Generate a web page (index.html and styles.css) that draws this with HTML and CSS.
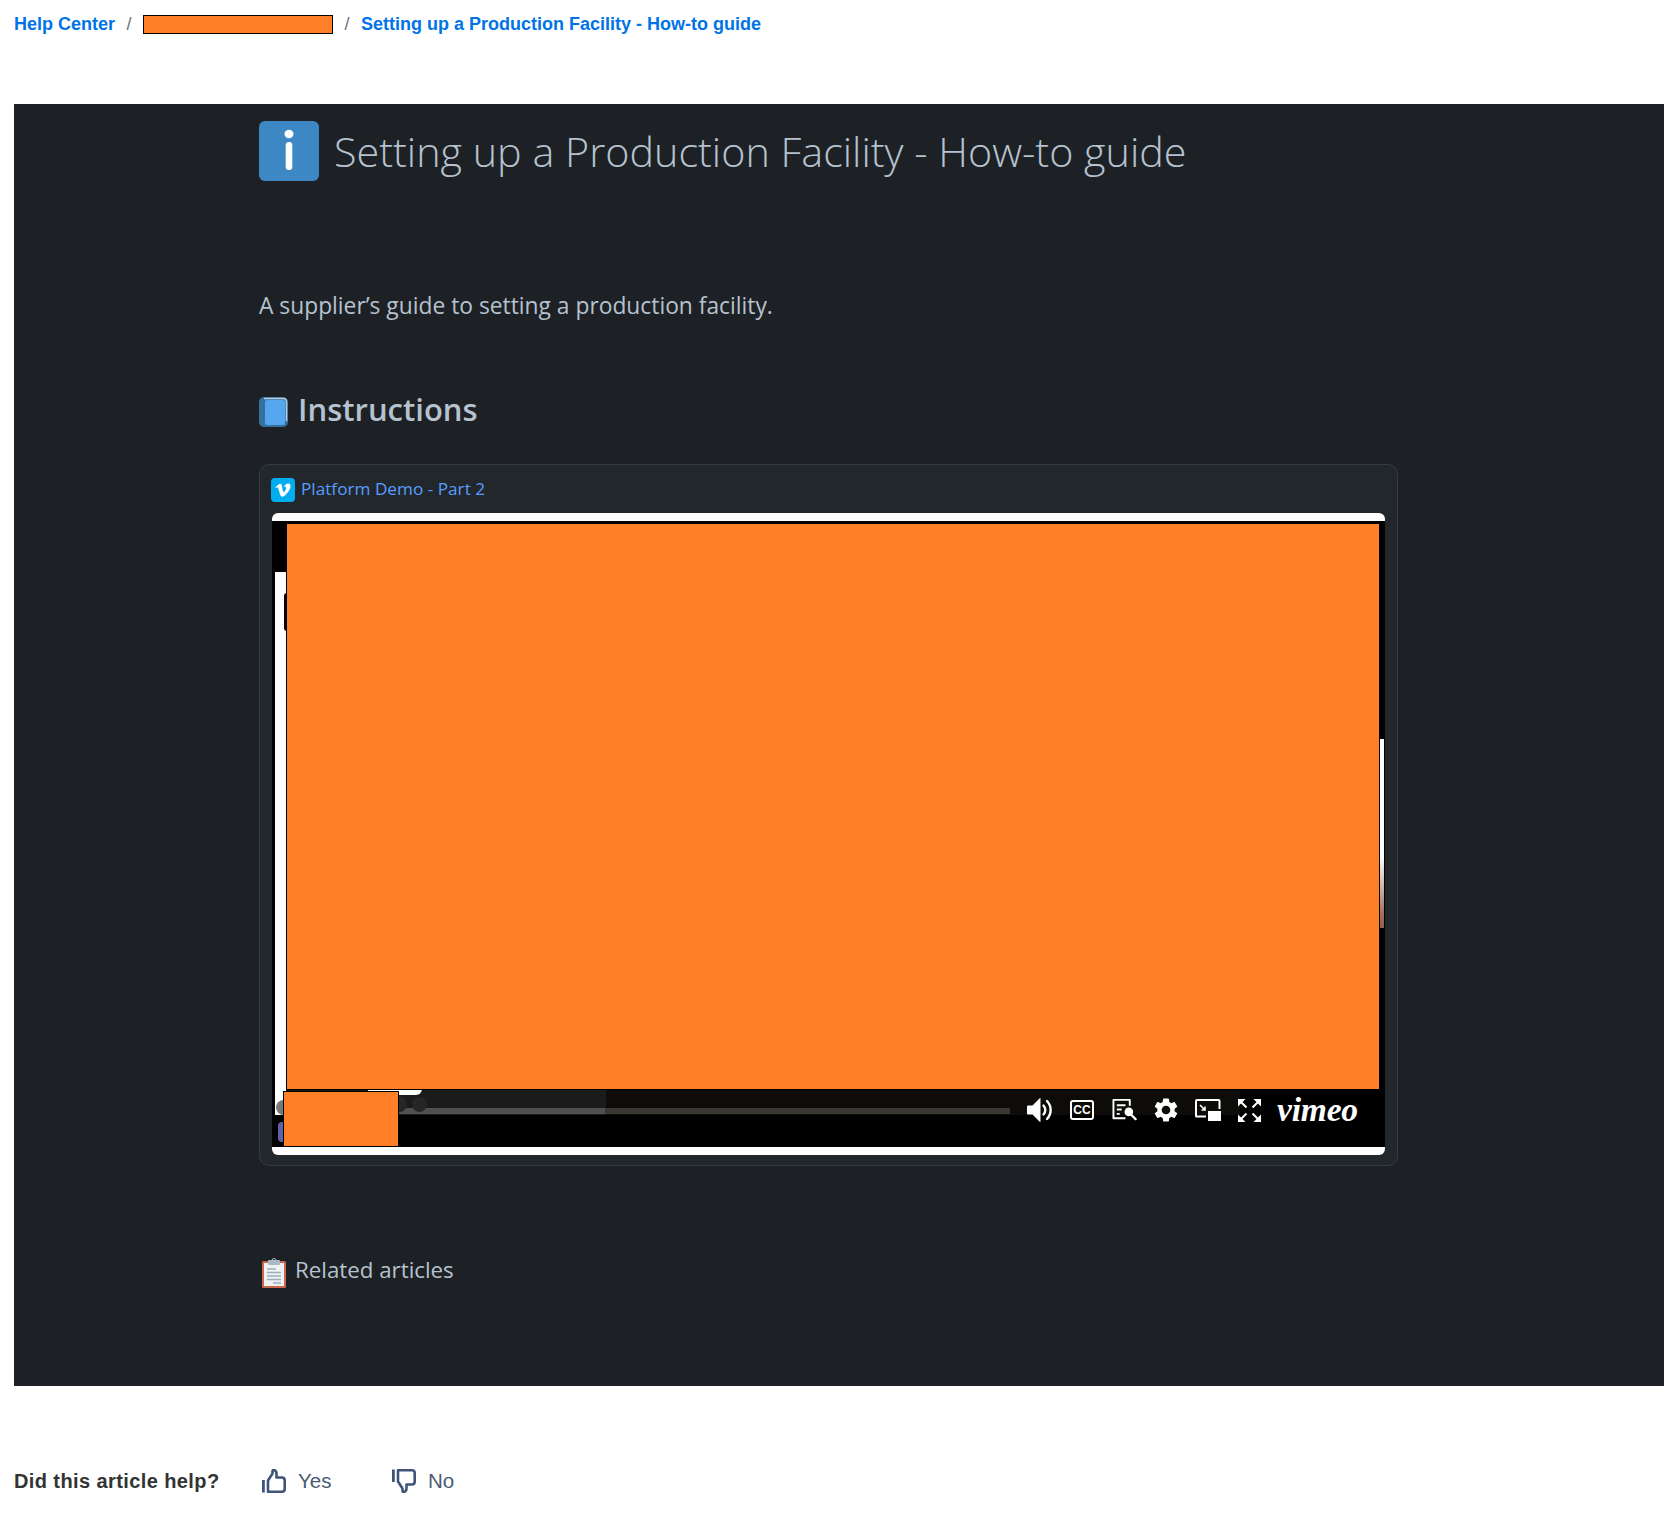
FILE: index.html
```html
<!DOCTYPE html>
<html lang="en">
<head>
    <meta charset="UTF-8">
    <title>Setting up a Production Facility - How-to guide</title>
    <link rel="stylesheet" href="styles.css">
</head>
<body>
    <nav class="breadcrumbs">
        <a class="crumb" href="#">Help Center</a>
        <span class="crumb-sep">/</span>
        <span class="crumb-hidden"></span>
        <span class="crumb-sep">/</span>
        <a class="crumb" href="#">Setting up a Production Facility - How-to guide</a>
    </nav>

    <main class="article">
        <div class="title-row">
            <svg class="info-icon" viewBox="0 0 60 60">
                <rect width="60" height="60" rx="6" fill="#3d88c4"/>
                <ellipse cx="30" cy="13" rx="4.500" ry="4.200" fill="#fff"/>
                <rect x="26.700" y="21" width="6.600" height="28" rx="3.300" fill="#fff"/>
            </svg>
            <h1>Setting up a Production Facility - How-to guide</h1>
        </div>

        <p class="lead">A supplier’s guide to setting a production facility.</p>

        <div class="section-row">
            <svg class="book-icon" viewBox="0 0 29 30">
                <rect x="0" y="0" width="29" height="30" rx="5" fill="#33719f"/>
                <path fill="none" stroke="#b9c9d6" stroke-width="1.500" d="M5 1.500h19c2 0 3.500 1.500 3.500 3.500v19"/>
                <rect x="6" y="3" width="20" height="25" rx="2" fill="#55a6ee"/>
            </svg>
            <h2>Instructions</h2>
        </div>

        <section class="card">
            <div class="card-head">
                <svg class="vimeo-icon" viewBox="0 0 24 24">
                    <rect width="24" height="24" rx="4" fill="#00adef"/>
                    <g transform="translate(4.400 4.600) scale(.63)">
                        <path fill="#fff" d="M23.977 6.416c-.105 2.338-1.739 5.543-4.894 9.609-3.268 4.247-6.026 6.37-8.29 6.37-1.409 0-2.578-1.294-3.553-3.881L5.322 11.4C4.603 8.816 3.834 7.522 3.01 7.522c-.179 0-.806.378-1.881 1.132L0 7.197c1.185-1.044 2.351-2.084 3.501-3.128C5.08 2.701 6.266 1.984 7.055 1.91c1.867-.18 3.016 1.1 3.447 3.838.465 2.953.789 4.789.971 5.507.539 2.45 1.131 3.674 1.776 3.674.502 0 1.256-.796 2.265-2.385 1.004-1.589 1.54-2.797 1.612-3.628.144-1.371-.395-2.061-1.614-2.061-.574 0-1.167.121-1.777.391 1.186-3.868 3.434-5.757 6.762-5.637 2.473.06 3.628 1.664 3.493 4.797l-.013.01z"/>
                    </g>
                </svg>
                <a class="card-link" href="#">Platform Demo - Part 2</a>
            </div>

            <div class="player">
                <div class="stage">
                    <div class="screen-strip"></div>
                    <div class="screen-notch"></div>
                    <div class="side-strip"></div>
                    <div class="control-shade"></div>
                    <div class="control-shade-light"></div>
                    <div class="progress"></div>
                    <div class="tab-white"></div>
                    <div class="nav-dot nav-dot-a"></div>
                    <div class="nav-dot nav-dot-b"></div>
                    <div class="nav-dot nav-dot-c"></div>
                    <div class="teams-tile"></div>
                    <div class="redact redact-main"></div>
                    <div class="redact redact-small"></div>

                    <div class="controls">
                        <svg class="ctl ctl-sound" viewBox="0 0 25 24">
                            <path fill="#fff" stroke="#fff" stroke-width="1" stroke-linejoin="round" d="M.5 8h5l7.500-7.500v23L5.500 16h-5z"/>
                            <path fill="none" stroke="#fff" stroke-width="2.400" stroke-linecap="round" d="M16.500 7.500a6.500 6.500 0 0 1 0 9M20 3a13 13 0 0 1 0 18"/>
                        </svg>
                        <svg class="ctl ctl-cc" viewBox="0 0 24 20">
                            <rect x="1" y="1" width="22" height="18" rx="2" fill="none" stroke="#fff" stroke-width="2"/>
                            <text x="12" y="14.200" class="cc-text">CC</text>
                        </svg>
                        <svg class="ctl ctl-transcript" viewBox="0 0 26 24">
                            <path fill="none" stroke="#fff" stroke-width="2" stroke-linejoin="round" d="M14 20.500H1.500V1.500h17v6"/>
                            <path fill="none" stroke="#fff" stroke-width="2" d="M5 7h9M5 11.500h5M5 16h3"/>
                            <circle cx="17.500" cy="14" r="4.500" fill="#fff"/>
                            <path stroke="#fff" stroke-width="2.400" stroke-linecap="round" d="M20 17l4.500 4.500"/>
                        </svg>
                        <svg class="ctl ctl-gear" viewBox="2.400 2 19.200 20">
                            <path fill="#fff" d="M19.14 12.94c.04-.3.06-.61.06-.94 0-.32-.02-.64-.07-.94l2.03-1.58c.18-.14.23-.41.12-.61l-1.92-3.32c-.12-.22-.37-.29-.59-.22l-2.39.96c-.5-.38-1.03-.7-1.62-.94l-.36-2.54c-.04-.24-.24-.41-.48-.41h-3.84c-.24 0-.43.17-.47.41l-.36 2.54c-.59.24-1.13.57-1.62.94l-2.39-.96c-.22-.08-.47 0-.59.22L2.74 8.87c-.12.21-.08.47.12.61l2.03 1.58c-.05.3-.09.63-.09.94s.02.64.07.94l-2.03 1.58c-.18.14-.23.41-.12.61l1.92 3.32c.12.22.37.29.59.22l2.39-.96c.5.38 1.03.7 1.62.94l.36 2.54c.05.24.24.41.48.41h3.84c.24 0 .44-.17.47-.41l.36-2.54c.59-.24 1.13-.56 1.62-.94l2.39.96c.22.08.47 0 .59-.22l1.92-3.32c.12-.22.07-.47-.12-.61l-2.01-1.58zM12 15.6c-1.98 0-3.6-1.62-3.6-3.6s1.62-3.6 3.6-3.6 3.6 1.62 3.6 3.6-1.62 3.6-3.6 3.6z"/>
                        </svg>
                        <svg class="ctl ctl-pip" viewBox="0 0 26 22">
                            <path fill="none" stroke="#fff" stroke-width="2" stroke-linejoin="round" d="M11 17.500H1.500a.5.5 0 0 1-.5-.5V2a1 1 0 0 1 1-1h21.500a1 1 0 0 1 1 1v8"/>
                            <path fill="none" stroke="#fff" stroke-width="1.600" d="M5 6l5 5M10 7.500V11H6.500"/>
                            <rect x="13" y="12" width="13" height="10" fill="#fff"/>
                        </svg>
                        <svg class="ctl ctl-full" viewBox="0 0 23 23">
                            <path fill="#fff" d="M0 0h7.500L0 7.500zM23 0v7.500L15.500 0zM0 23v-7.500L7.500 23zM23 23h-7.500l7.500-7.500z"/>
                            <path fill="none" stroke="#fff" stroke-width="2" d="M3 3l5.500 5.500M20 3l-5.500 5.500M3 20l5.500-5.500M20 20l-5.500-5.500"/>
                        </svg>
                        <span class="vimeo-word">vimeo</span>
                    </div>
                </div>
            </div>
        </section>

        <div class="related-row">
            <svg class="clip-icon" viewBox="0 0 24 30">
                <rect x="0" y="3" width="24" height="27" rx="1.500" fill="#c9694a"/>
                <rect x="2" y="5" width="20" height="23" fill="#eef2f5"/>
                <rect x="6" y="2" width="12" height="5" rx="1" fill="#a9bac6"/>
                <circle cx="12" cy="2.500" r="2" fill="none" stroke="#a9bac6" stroke-width="1"/>
                <path stroke="#9fb0bc" stroke-width="1.400" d="M5 11h9M5 14.500h14M5 18h14M5 21.500h14M11 25h8"/>
            </svg>
            <span class="related-text">Related articles</span>
        </div>
    </main>

    <footer class="feedback">
        <strong class="feedback-label">Did this article help?</strong>
        <a class="vote vote-yes" href="#">
            <svg class="thumb" viewBox="0 0 24 24">
                <path fill="#3f5577" d="M0 11h2.800v12.500H0z"/>
                <path fill="none" stroke="#3f5577" stroke-width="2.600" stroke-linejoin="round" d="M6 22.700V11.500l4.500-7V2c0-.8 1-1.200 2-.8 1.500.6 2 2 2 3.500v3.800h5.500c2 0 2.700 1.200 2.700 3V20c0 1.800-1 2.700-2.700 2.700z"/>
            </svg>
            <span>Yes</span>
        </a>
        <a class="vote vote-no" href="#">
            <svg class="thumb" viewBox="0 0 24 24">
                <path fill="#3f5577" d="M0 .5h2.800V13H0z"/>
                <path fill="none" stroke="#3f5577" stroke-width="2.600" stroke-linejoin="round" d="M6 1.300v11.200l4.500 7V22c0 .8 1 1.200 2 .8 1.500-.6 2-2 2-3.500v-3.800h5.500c2 0 2.700-1.200 2.700-3V4c0-1.800-1-2.700-2.700-2.700z"/>
            </svg>
            <span>No</span>
        </a>
    </footer>
</body>
</html>
```

FILE: styles.css
```css
body {
    margin: 0;
    padding: 0 4px 0 14px;
    background-color: #fff;
    font-family: "Liberation Sans", Arial, sans-serif;
}

/* Breadcrumbs */
.breadcrumbs {
    display: flex;
    align-items: center;
    height: 48px;
    margin-bottom: 56px;
}
.crumb {
    color: #0073e6;
    font-size: 18px;
    font-weight: bold;
    text-decoration: none;
}
.crumb-sep {
    width: 5px;
    margin: 0 11.5px;
    color: #6b7280;
    font-size: 18px;
}
.crumb-hidden {
    width: 188px;
    height: 17px;
    background-color: #ff7f27;
    border: 1px solid #000;
}

/* Dark article panel */
.article {
    box-sizing: border-box;
    height: 1282px;
    padding: 17px 0 0 245px;
    background-color: #1d2125;
    color: #b6c2cf;
    font-family: "Open Sans", "Noto Sans", sans-serif;
}
.title-row {
    display: flex;
    align-items: center;
    gap: 15px;
}
.info-icon {
    width: 60px;
    height: 60px;
    flex-shrink: 0;
}
h1 {
    margin: 0;
    font-size: 41.3px;
    font-weight: 300;
    line-height: 60px;
}
.lead {
    margin: 109px 0 0;
    font-size: 22.8px;
    line-height: 32px;
}
.section-row {
    display: flex;
    align-items: center;
    gap: 10px;
    margin-top: 72px;
    height: 30px;
}
.book-icon {
    width: 29px;
    height: 30px;
    margin-top: 6px;
}
h2 {
    margin: 0;
    font-size: 31px;
    font-weight: 600;
    line-height: 30px;
}

/* Embedded video card */
.card {
    box-sizing: border-box;
    width: 1139px;
    height: 702px;
    margin-top: 40px;
    padding: 13px 12px 10px;
    background-color: #22272b;
    border: 1px solid #343b42;
    border-radius: 10px;
}
.card-head {
    display: flex;
    align-items: center;
    gap: 6px;
    height: 24px;
    margin-bottom: 11px;
}
.vimeo-icon {
    width: 24px;
    height: 24px;
    margin-left: -1px;
}
.card-link {
    margin-bottom: 4px;
    color: #579dff;
    font-size: 17.2px;
    text-decoration: none;
}
.player {
    padding: 8px 0;
    background-color: #fff;
    border-radius: 6px;
}
.stage {
    position: relative;
    height: 626px;
    background-color: #000;
}
.screen-strip {
    position: absolute;
    left: 3px;
    top: 51px;
    width: 11px;
    height: 543px;
    background-color: #fff;
}
.screen-notch {
    position: absolute;
    left: 12px;
    top: 72px;
    width: 4px;
    height: 38px;
    background-color: #000;
    border-radius: 3px 0 0 3px;
}
.side-strip {
    position: absolute;
    left: 1108px;
    top: 218px;
    width: 4px;
    height: 189px;
    background: linear-gradient(#fff 0, #fff 62%, #a5745f 92%, #8d6350 100%);
}
.control-shade {
    position: absolute;
    left: 14px;
    top: 568px;
    width: 954px;
    height: 26px;
    background-color: #0d0c09;
}
.control-shade-light {
    position: absolute;
    left: 14px;
    top: 568px;
    width: 320px;
    height: 26px;
    background-color: #1b1b1b;
}
.progress {
    position: absolute;
    left: 14px;
    top: 587px;
    width: 724px;
    height: 6px;
    background: linear-gradient(90deg, #505050 44%, #3a3833 44%);
}
.tab-white {
    position: absolute;
    left: 96px;
    top: 568px;
    width: 54px;
    height: 6px;
    background-color: #fff;
    border-radius: 0 0 6px 0;
}
.nav-dot {
    position: absolute;
    width: 15px;
    height: 15px;
    background-color: #262626;
    border-radius: 50%;
}
.nav-dot-a {
    left: 4px;
    top: 579px;
    background-color: #777;
}
.nav-dot-b {
    left: 120px;
    top: 576px;
}
.nav-dot-c {
    left: 140px;
    top: 576px;
}
.teams-tile {
    position: absolute;
    left: 6px;
    top: 601px;
    width: 14px;
    height: 20px;
    background-color: #5d62a8;
    border-radius: 4px 0 0 4px;
}
.redact {
    position: absolute;
    box-sizing: border-box;
    background-color: #ff7f27;
    border: 1px solid #000;
}
.redact-main {
    left: 14px;
    top: 2px;
    width: 1094px;
    height: 567px;
}
.redact-small {
    left: 11px;
    top: 570px;
    width: 116px;
    height: 56px;
}

/* Player controls */
.controls {
    position: absolute;
    right: 27px;
    top: 577px;
    display: flex;
    align-items: center;
    height: 24px;
}
.ctl {
    display: block;
    height: 24px;
}
.ctl-sound { width: 25px; margin-right: 18px; }
.ctl-cc { width: 24px; height: 20px; margin-right: 18px; }
.ctl-transcript { width: 25px; margin-right: 17px; }
.ctl-gear { width: 24px; margin-right: 17px; }
.ctl-pip { width: 26px; height: 22px; margin-right: 17px; }
.ctl-full { width: 23px; height: 23px; margin-right: 16px; }
.cc-text {
    fill: #fff;
    font-family: "Liberation Sans", sans-serif;
    font-size: 12px;
    font-weight: bold;
    text-anchor: middle;
}
.vimeo-word {
    width: 81px;
    color: #fff;
    font-family: "Liberation Serif", serif;
    font-size: 33.5px;
    font-style: italic;
    font-weight: bold;
    line-height: 24px;
    letter-spacing: -.2px;
    white-space: nowrap;
}

/* Related articles */
.related-row {
    display: flex;
    align-items: center;
    gap: 9px;
    height: 30px;
    margin: 88px 0 0 3px;
}
.clip-icon {
    width: 24px;
    height: 30px;
    margin-top: 8px;
}
.related-text {
    font-size: 22.3px;
}

/* Feedback */
.feedback {
    display: flex;
    align-items: center;
    height: 28px;
    margin-top: 81px;
    color: #333;
    font-size: 20px;
}
.feedback-label {
    width: 248px;
    letter-spacing: .4px;
}
.vote {
    display: flex;
    align-items: center;
    gap: 12px;
    color: #4a5a75;
    font-size: 20.5px;
    text-decoration: none;
}
.vote-yes {
    width: 130px;
}
.thumb {
    width: 24px;
    height: 24px;
}
```
